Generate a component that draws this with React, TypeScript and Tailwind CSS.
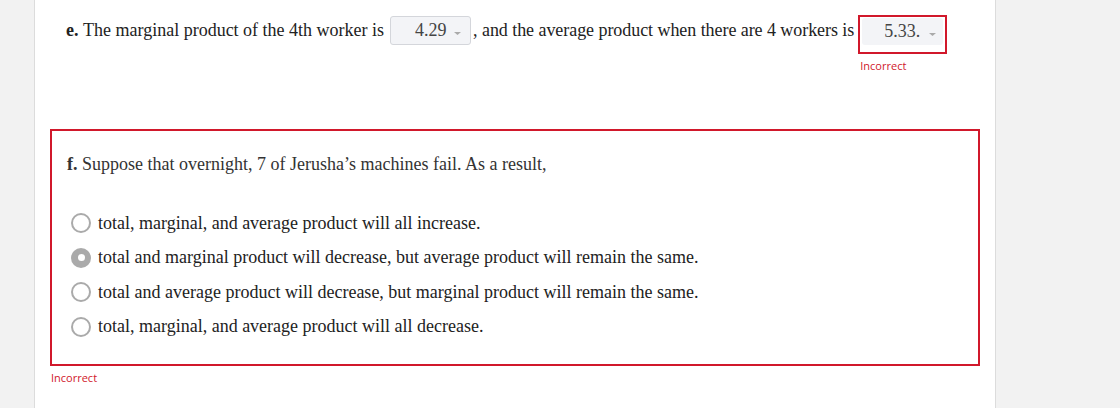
import React from "react";

const serif = { fontFamily: '"Liberation Serif", "Times New Roman", serif' };

const Dropdown = ({ value }: { value: string }) => (
  <span className="inline-flex h-[29px] w-[81px] items-center rounded-[3px] border border-[#d4d6db] bg-[#f3f4f7] pl-[24px] align-middle text-[#444]">
    <span>{value}</span>
    <svg width="9" height="5" viewBox="0 0 9 5" className="ml-[6px] mt-[6px]">
      <path d="M1 1h7L4.5 4z" fill="#aaa" />
    </svg>
  </span>
);

const Incorrect = ({ className = "" }: { className?: string }) => (
  <div
    className={`text-[11px] leading-none text-[#d1182b] ${className}`}
    style={{ fontFamily: '"Open Sans", "Noto Sans", sans-serif' }}
  >
    Incorrect
  </div>
);

const Radio = ({ checked }: { checked?: boolean }) =>
  checked ? (
    <span className="flex h-[20px] w-[20px] shrink-0 items-center justify-center rounded-full bg-[#aaa]">
      <span className="h-[7px] w-[7px] rounded-full bg-white" />
    </span>
  ) : (
    <span className="h-[20px] w-[20px] shrink-0 rounded-full border-2 border-[#aaa] bg-white" />
  );

const options = [
  "total, marginal, and average product will all increase.",
  "total and marginal product will decrease, but average product will remain the same.",
  "total and average product will decrease, but marginal product will remain the same.",
  "total, marginal, and average product will all decrease.",
];

export default function App() {
  return (
    <div className="flex h-[408px] w-[1120px] bg-[#f2f2f2]">
      <div className="w-[34px] shrink-0" />
      <div className="w-[962px] shrink-0 border-x border-[#dcdcdc] bg-white">
        {/* part e */}
        <div className="flex pl-[31px] pt-[16px] text-[18px] text-[#222]" style={serif}>
          <div className="flex h-[29px] items-center">
            <b>e.</b>&nbsp;The marginal product of the 4th worker is
          </div>
          <div className="ml-[6px]">
            <Dropdown value="4.29" />
          </div>
          <div className="ml-[2px] flex h-[29px] items-center tracking-[-0.06px]">
            , and the average product when there are 4 workers is
          </div>
          <div className="ml-[4px] -mt-[1px] flex flex-col">
            <div className="border-2 border-[#d1182b] px-[2px] pt-[1px] pb-[7px]">
              <span className="inline-flex h-[27px] w-[81px] items-center rounded-[3px] bg-[#f3f4f7] pl-[22px] text-[#444]">
                <span>5.33.</span>
                <svg width="9" height="5" viewBox="0 0 9 5" className="ml-[8px] mt-[6px]">
                  <path d="M1 1h7L4.5 4z" fill="#aaa" />
                </svg>
              </span>
            </div>
            <Incorrect className="mt-[6px] pl-[2px]" />
          </div>
        </div>

        {/* part f */}
        <div className="ml-[15px] mt-[58px] w-[930px]">
          <div className="h-[237px] border-2 border-[#d1182b] pl-[15px] pt-[20px] text-[18px] text-[#222]" style={serif}>
            <div className="text-[#333]">
              <b>f.</b> Suppose that overnight, 7 of Jerusha’s machines fail. As a result,
            </div>
            <div className="mt-[35px] flex flex-col gap-[14.6px] pl-[4px]">
              {options.map((o, i) => (
                <label key={o} className="flex h-[20px] items-center gap-[7px]">
                  <Radio checked={i === 1} />
                  <span>{o}</span>
                </label>
              ))}
            </div>
          </div>
          <Incorrect className="mt-[6px] pl-[1px]" />
        </div>
      </div>
    </div>
  );
}
